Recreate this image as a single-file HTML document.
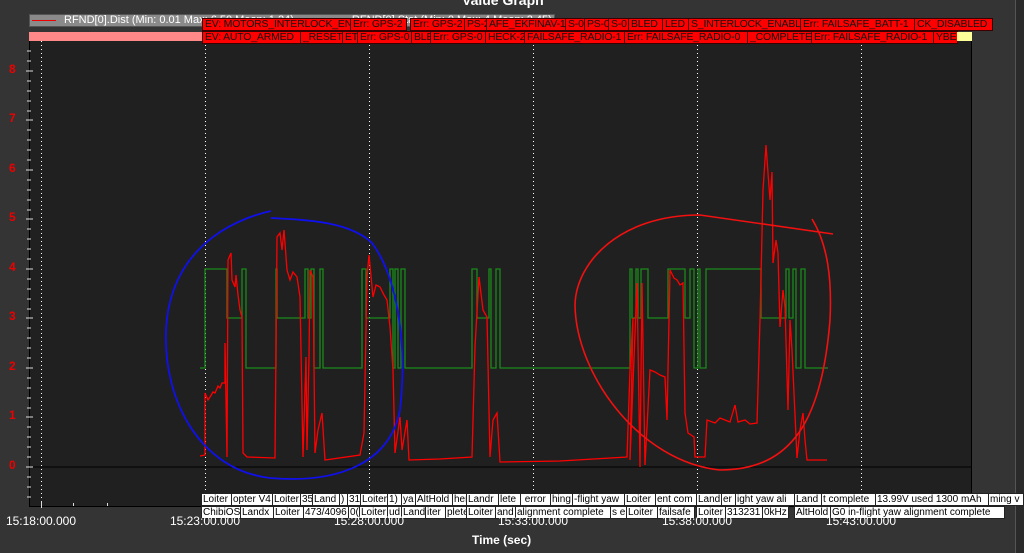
<!DOCTYPE html>
<html><head><meta charset="utf-8"><style>
*{margin:0;padding:0;box-sizing:border-box}
body{width:1024px;height:553px;background:#343434;position:relative;overflow:hidden;font-family:"Liberation Sans",sans-serif}
.a{position:absolute;white-space:nowrap;overflow:hidden}
.ev{position:absolute;height:13px;background:#ff0000;border:1px solid #3a0000;color:#111;font-size:10.5px;letter-spacing:-0.2px;line-height:11px;padding-left:2px;white-space:nowrap;overflow:hidden}
.mb{position:absolute;height:13px;background:#fff;border:1px solid #222;color:#000;font-size:10px;line-height:11px;padding-left:1px;white-space:nowrap;overflow:hidden}
.yl{position:absolute;left:9px;color:#e00;font-size:12px;font-weight:bold}
.xl{position:absolute;top:514px;color:#fff;font-size:12px;width:100px;text-align:center}
</style></head><body>
<div class="a" style="left:462px;top:-8px;color:#fff;font-size:14px;font-weight:bold">Value Graph</div>
<div class="a" style="left:1015px;top:0;width:9px;height:553px;background:#2a2a2a;border-left:1px solid #555"></div>
<div class="a" style="left:29px;top:41px;width:943px;height:466px;background:#202020;border-left:1px solid #000;border-right:1px solid #000;border-bottom:1px solid #000"></div>
<div class="a" style="left:29px;top:14px;width:526px;height:13px;background:#8a8a8a;border:1px solid #555;color:#fff;font-size:11px;line-height:11px;padding-left:34px">RFND[0].Dist (Min: 0.01 Max: 6.50 Mean: 1.24)&nbsp;&nbsp;&nbsp;&nbsp;&nbsp;&nbsp;&nbsp;&nbsp;&nbsp;&nbsp;&nbsp;&nbsp;&nbsp;&nbsp;&nbsp;&nbsp;&nbsp;&nbsp;&nbsp;RFND[0].Stat (Min: 0 Max: 4 Mean: 2.45)</div>
<div class="a" style="left:32px;top:20px;width:24px;height:1px;background:#e00"></div>
<div class="a" style="left:29px;top:32px;width:176px;height:9px;background:#f88"></div>
<svg class="a" style="left:0;top:0" width="1024" height="553">
<g stroke="#fff" stroke-dasharray="1,3" stroke-width="1">
<line x1="41.5" y1="41" x2="41.5" y2="507"/><line x1="205.5" y1="41" x2="205.5" y2="507"/><line x1="369.5" y1="41" x2="369.5" y2="507"/><line x1="533.5" y1="41" x2="533.5" y2="507"/><line x1="697.5" y1="41" x2="697.5" y2="507"/><line x1="861.5" y1="41" x2="861.5" y2="507"/>
</g>
<line x1="29" y1="467" x2="972" y2="467" stroke="#000"/>
<g stroke="#ddd" stroke-width="1">
<path d="M27 51h4M27 61h4M26 71h7M27 81h4M27 91h4M27 101h4M27 111h4M26 120h7M27 130h4M27 140h4M27 150h4M27 160h4M26 170h7M27 180h4M27 190h4M27 200h4M27 210h4M26 219h7M27 229h4M27 239h4M27 249h4M27 259h4M26 269h7M27 279h4M27 289h4M27 299h4M27 309h4M26 318h7M27 328h4M27 338h4M27 348h4M27 358h4M26 368h7M27 378h4M27 388h4M27 398h4M27 408h4M26 417h7M27 427h4M27 437h4M27 447h4M27 457h4M26 467h7M27 477h4M27 487h4M27 497h4"/>
<path d="M41.5 501v7M73.5 503v3M107.5 503v3"/>
</g>
<polyline fill="none" stroke="#1a8a1a" stroke-width="1.3" points="200,368 205,368 205,269 227,269 227,318 242,318 242,269 246,269 246,368 276,368 276,269 277,269 277,318 305,318 305,269 308,269 308,318 311,318 311,269 314,269 314,368 320,368 320,269 323,269 323,368 362,368 362,269 366,269 366,318 390,318 390,269 393,269 393,368 395,368 395,269 398,269 398,368 401,368 401,269 405,269 405,368 472,368 472,269 477,269 477,318 489,318 489,269 491,269 491,368 496,368 496,269 500,269 500,368 630,368 630,269 632,269 632,318 636,318 636,269 638,269 638,318 641,318 641,269 648,269 648,318 668,318 668,269 685,269 685,318 690,318 690,269 694,269 694,368 698,368 698,269 700,269 700,368 706,368 706,269 761,269 761,318 786,318 786,269 789,269 789,318 793,318 793,269 796,269 796,368 801,368 801,269 805,269 805,368 828,368"/>
<polyline fill="none" stroke="#ff0000" stroke-width="1.3" points="200,456 205,455 205,393 208,400 210,397 213,392 215,393 218,386 220,388 222,383 225,383 225,343 227,457 228,260 231,253 232,280 235,287 236,275 238,295 240,310 242,317 243,453 247,457 275,458 277,237 280,233 282,250 284,230 287,270 290,280 293,272 297,277 300,297 303,457 306,357 307,450 309,357 310,270 313,277 315,453 318,430 322,413 325,460 360,455 364,433 367,277 369,255 373,297 376,285 380,287 384,295 387,300 390,327 393,370 395,453 400,417 402,450 407,420 409,460 440,459 472,457 475,347 479,277 483,310 487,317 490,457 493,420 497,413 500,462 560,461 627,457 630,370 633,318 630,460 637,283 640,467 642,283 645,465 650,370 655,372 660,375 665,377 667,420 670,270 674,278 677,280 680,285 683,283 685,413 688,433 694,437 695,457 705,457 707,420 715,423 720,418 730,422 735,405 738,422 745,420 750,424 757,423 760,320 763,190 766,145 768,173 770,200 772,172 773,263 776,240 778,253 780,327 783,290 785,307 788,410 790,320 792,350 797,458 800,430 803,413 805,440 807,460 827,460"/>
<path fill="none" stroke="#1010ee" stroke-width="1.8" d="M271 211 C230 220 170 250 166 330 C163 400 200 470 270 478 C340 484 390 462 400 410 C408 340 396 275 372 243 C350 222 310 220 271 218"/>
<path fill="none" stroke="#f21010" stroke-width="1.6" d="M833 234 L700 215 C620 215 576 262 575 305 C576 375 640 462 720 470 C792 470 822 420 830 320 C832 280 828 245 812 219"/>
</svg>
<div class="yl" style="top:62px">8</div><div class="yl" style="top:111px">7</div><div class="yl" style="top:161px">6</div><div class="yl" style="top:210px">5</div><div class="yl" style="top:260px">4</div><div class="yl" style="top:309px">3</div><div class="yl" style="top:359px">2</div><div class="yl" style="top:408px">1</div><div class="yl" style="top:458px">0</div>
<div class="ev" style="top:18px;left:202px;width:149px">EV: MOTORS_INTERLOCK_EN</div>
<div class="ev" style="top:18px;left:350px;width:57px">Err: GPS-2</div>
<div class="ev" style="top:18px;left:410px;width:55px">Err: GPS-2</div>
<div class="ev" style="top:18px;left:464px;width:23px">PS-2</div>
<div class="ev" style="top:18px;left:486px;width:80px">AFE_EKFINAV-1</div>
<div class="ev" style="top:18px;left:565px;width:20px">S-0</div>
<div class="ev" style="top:18px;left:584px;width:25px">PS-0</div>
<div class="ev" style="top:18px;left:608px;width:21px">S-0</div>
<div class="ev" style="top:18px;left:628px;width:35px">BLED</div>
<div class="ev" style="top:18px;left:662px;width:27px">LED</div>
<div class="ev" style="top:18px;left:688px;width:113px">S_INTERLOCK_ENABL</div>
<div class="ev" style="top:18px;left:800px;width:115px">Err: FAILSAFE_BATT-1</div>
<div class="ev" style="top:18px;left:914px;width:79px">CK_DISABLED</div>
<div class="ev" style="top:31px;left:202px;width:99px">EV: AUTO_ARMED</div>
<div class="ev" style="top:31px;left:300px;width:43px">_RESET</div>
<div class="ev" style="top:31px;left:342px;width:16px">ET</div>
<div class="ev" style="top:31px;left:357px;width:55px">Err: GPS-0</div>
<div class="ev" style="top:31px;left:411px;width:20px">BLE</div>
<div class="ev" style="top:31px;left:430px;width:56px">Err: GPS-0</div>
<div class="ev" style="top:31px;left:485px;width:40px">HECK-2</div>
<div class="ev" style="top:31px;left:524px;width:101px">FAILSAFE_RADIO-1</div>
<div class="ev" style="top:31px;left:624px;width:124px">Err: FAILSAFE_RADIO-0</div>
<div class="ev" style="top:31px;left:747px;width:65px">_COMPLETE</div>
<div class="ev" style="top:31px;left:811px;width:123px">Err: FAILSAFE_RADIO-1</div>
<div class="ev" style="top:31px;left:933px;width:25px">YBE</div>
<div class="a" style="top:32px;left:957px;width:15px;height:9px;background:#ffff99"></div>
<div class="mb" style="top:493px;left:201px;width:31px">Loiter</div>
<div class="mb" style="top:493px;left:231px;width:42px">opter V4</div>
<div class="mb" style="top:493px;left:272px;width:29px">Loiter</div>
<div class="mb" style="top:493px;left:300px;width:13px">35</div>
<div class="mb" style="top:493px;left:312px;width:28px">Land</div>
<div class="mb" style="top:493px;left:339px;width:9px">)</div>
<div class="mb" style="top:493px;left:347px;width:14px">31</div>
<div class="mb" style="top:493px;left:360px;width:28px">Loiter</div>
<div class="mb" style="top:493px;left:387px;width:15px">1)</div>
<div class="mb" style="top:493px;left:401px;width:15px">ya</div>
<div class="mb" style="top:493px;left:415px;width:38px">AltHold</div>
<div class="mb" style="top:493px;left:452px;width:15px">her</div>
<div class="mb" style="top:493px;left:466px;width:33px">Landr</div>
<div class="mb" style="top:493px;left:498px;width:23px">lete</div>
<div class="mb" style="top:493px;left:520px;width:31px">&nbsp;error</div>
<div class="mb" style="top:493px;left:550px;width:23px">hing</div>
<div class="mb" style="top:493px;left:572px;width:53px">-flight yaw</div>
<div class="mb" style="top:493px;left:624px;width:32px">Loiter</div>
<div class="mb" style="top:493px;left:655px;width:42px">ent com</div>
<div class="mb" style="top:493px;left:696px;width:26px">Land</div>
<div class="mb" style="top:493px;left:721px;width:15px">er</div>
<div class="mb" style="top:493px;left:735px;width:60px">ight yaw ali</div>
<div class="mb" style="top:493px;left:794px;width:28px">Land</div>
<div class="mb" style="top:493px;left:821px;width:55px">t complete</div>
<div class="mb" style="top:493px;left:875px;width:114px">13.99V used 1300 mAh</div>
<div class="mb" style="top:493px;left:988px;width:36px">ming v</div>
<div class="mb" style="top:506px;left:201px;width:40px">ChibiOS</div>
<div class="mb" style="top:506px;left:240px;width:34px">Landx</div>
<div class="mb" style="top:506px;left:273px;width:31px">Loiter</div>
<div class="mb" style="top:506px;left:303px;width:46px">473/4096</div>
<div class="mb" style="top:506px;left:348px;width:12px">0(</div>
<div class="mb" style="top:506px;left:359px;width:29px">Loiter</div>
<div class="mb" style="top:506px;left:387px;width:15px">ud</div>
<div class="mb" style="top:506px;left:401px;width:25px">Land</div>
<div class="mb" style="top:506px;left:425px;width:21px">iter</div>
<div class="mb" style="top:506px;left:445px;width:22px">plete</div>
<div class="mb" style="top:506px;left:466px;width:30px">Loiter</div>
<div class="mb" style="top:506px;left:495px;width:21px">and</div>
<div class="mb" style="top:506px;left:515px;width:96px">alignment complete</div>
<div class="mb" style="top:506px;left:610px;width:17px">s er</div>
<div class="mb" style="top:506px;left:626px;width:32px">Loiter</div>
<div class="mb" style="top:506px;left:657px;width:38px">failsafe</div>
<div class="mb" style="top:506px;left:696px;width:30px">Loiter</div>
<div class="mb" style="top:506px;left:725px;width:38px">313231</div>
<div class="mb" style="top:506px;left:762px;width:27px">0kHz</div>
<div class="mb" style="top:506px;left:794px;width:37px">AltHold</div>
<div class="mb" style="top:506px;left:830px;width:175px">G0 in-flight yaw alignment complete</div>
<div class="xl" style="left:-9px">15:18:00.000</div>
<div class="xl" style="left:155px">15:23:00.000</div>
<div class="xl" style="left:319px">15:28:00.000</div>
<div class="xl" style="left:483px">15:33:00.000</div>
<div class="xl" style="left:647px">15:38:00.000</div>
<div class="xl" style="left:811px">15:43:00.000</div>
<div class="a" style="left:472px;top:533px;color:#fff;font-size:12px;font-weight:bold">Time (sec)</div>
</body></html>
